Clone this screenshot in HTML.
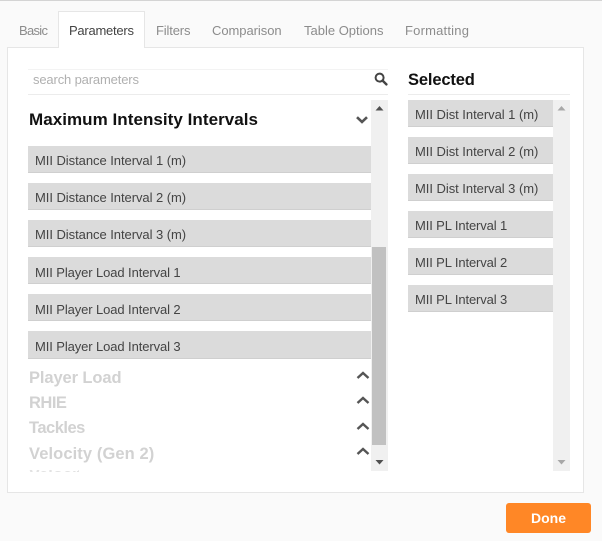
<!DOCTYPE html>
<html>
<head>
<meta charset="utf-8">
<style>
html,body{margin:0;padding:0}
body{width:602px;height:541px;background:#fafafa;position:relative;overflow:hidden;font-family:"Liberation Sans",sans-serif;color:#333}
.a{position:absolute;white-space:nowrap}
#top{left:0;top:0;width:602px;height:1px;background:#d4d4d4}
#panel{left:7px;top:47px;width:575px;height:444px;background:#fff;border:1px solid #e6e6e6;box-sizing:content-box}
#tabact{left:58px;top:11px;width:87px;height:37px;background:#fff;border:1px solid #e6e6e6;border-bottom:none;box-sizing:border-box;z-index:2}
.tab{top:22px;font-size:13px;line-height:17px;color:#8c8c8c;z-index:3}
.item{left:28px;width:343px;height:27px;background:#dbdbdb;border-bottom:1px solid #cfcfcf;box-sizing:border-box;font-size:13px;line-height:29px;padding-left:7px;color:#444;letter-spacing:-.05px}
.pl{letter-spacing:-.1px;line-height:31px}
.sel{left:408px;width:145px;height:27px;background:#dbdbdb;border-bottom:1px solid #cfcfcf;box-sizing:border-box;font-size:13px;line-height:29px;padding-left:7px;color:#444;letter-spacing:-.04px}
.sp{letter-spacing:-.12px}
.grp{left:29px;font-size:16.5px;font-weight:bold;color:#d2d2d2;line-height:22px}
svg{position:absolute;overflow:visible}
</style>
</head>
<body>
<div class="a" id="top"></div>
<div class="a" id="panel"></div>
<div class="a" id="tabact"></div>
<div class="a tab" style="left:19px;letter-spacing:-.7px">Basic</div>
<div class="a tab" style="left:69px;color:#444;letter-spacing:-.25px">Parameters</div>
<div class="a tab" style="left:156px;letter-spacing:-.15px">Filters</div>
<div class="a tab" style="left:212px;letter-spacing:-.05px">Comparison</div>
<div class="a tab" style="left:304px;letter-spacing:0">Table Options</div>
<div class="a tab" style="left:405px;letter-spacing:.2px">Formatting</div>

<!-- search -->
<div class="a" style="left:28px;top:69px;width:360px;height:26px;border-top:1px solid #f3f3f3;border-bottom:1px solid #ececec;box-sizing:border-box"></div>
<div class="a" style="left:33px;top:71px;font-size:13px;line-height:17px;color:#b0b0b0;letter-spacing:-.15px">search parameters</div>
<svg style="left:374px;top:72px" width="14" height="14" viewBox="0 0 14 14"><circle cx="5.6" cy="5.6" r="4" fill="none" stroke="#444" stroke-width="2"/><path d="M8.6 8.6L12.4 12.4" stroke="#444" stroke-width="2.4" stroke-linecap="round"/></svg>

<div class="a" style="left:29px;top:108px;font-size:17px;line-height:23px;font-weight:bold;color:#111;letter-spacing:.05px">Maximum Intensity Intervals</div>
<svg style="left:355px;top:115px" width="14" height="10" viewBox="0 0 14 10"><path d="M2 2.2L7 7L12 2.2" fill="none" stroke="#555" stroke-width="2.6"/></svg>

<div class="a item" style="top:146px">MII Distance Interval 1 (m)</div>
<div class="a item" style="top:183px">MII Distance Interval 2 (m)</div>
<div class="a item" style="top:220px">MII Distance Interval 3 (m)</div>
<div class="a item pl" style="top:257px">MII Player Load Interval 1</div>
<div class="a item pl" style="top:294px">MII Player Load Interval 2</div>
<div class="a item pl" style="top:331px;height:28px">MII Player Load Interval 3</div>

<div class="a grp" style="top:367px;letter-spacing:-.1px">Player Load</div>
<div class="a grp" style="top:392px;letter-spacing:-.5px">RHIE</div>
<div class="a grp" style="top:417px;letter-spacing:-.5px">Tackles</div>
<div class="a grp" style="top:443px;letter-spacing:.1px">Velocity (Gen 2)</div>
<div class="a" style="left:29px;top:470px;width:50px;height:2px;overflow:hidden"><div style="font-size:16.5px;font-weight:bold;color:#e2e2e2;line-height:22px;margin-top:-6px">Velocity</div></div>

<svg style="left:356px;top:371px" width="14" height="9" viewBox="0 0 14 9"><path d="M1.5 7L7 2L12.5 7" fill="none" stroke="#555" stroke-width="2.4"/></svg>
<svg style="left:356px;top:396px" width="14" height="9" viewBox="0 0 14 9"><path d="M1.5 7L7 2L12.5 7" fill="none" stroke="#555" stroke-width="2.4"/></svg>
<svg style="left:356px;top:422px" width="14" height="9" viewBox="0 0 14 9"><path d="M1.5 7L7 2L12.5 7" fill="none" stroke="#555" stroke-width="2.4"/></svg>
<svg style="left:356px;top:447px" width="14" height="9" viewBox="0 0 14 9"><path d="M1.5 7L7 2L12.5 7" fill="none" stroke="#555" stroke-width="2.4"/></svg>

<!-- left scrollbar -->
<div class="a" style="left:371px;top:100px;width:17px;height:371px;background:#f0f0f0"></div>
<div class="a" style="left:372px;top:247px;width:14px;height:198px;background:#c1c1c1"></div>
<svg style="left:375px;top:106px" width="9" height="5"><path d="M4.5 0L8.5 4.5H0.5Z" fill="#505050"/></svg>
<svg style="left:375px;top:460px" width="9" height="5"><path d="M0.5 0H8.5L4.5 4.5Z" fill="#505050"/></svg>

<!-- selected -->
<div class="a" style="left:408px;top:69px;font-size:16.5px;line-height:22px;font-weight:bold;color:#111;letter-spacing:-.15px">Selected</div>
<div class="a" style="left:408px;top:94px;width:162px;height:1px;background:#ececec"></div>
<div class="a sel" style="top:100px">MII Dist Interval 1 (m)</div>
<div class="a sel" style="top:137px">MII Dist Interval 2 (m)</div>
<div class="a sel" style="top:174px">MII Dist Interval 3 (m)</div>
<div class="a sel sp" style="top:211px">MII PL Interval 1</div>
<div class="a sel sp" style="top:248px">MII PL Interval 2</div>
<div class="a sel sp" style="top:285px">MII PL Interval 3</div>

<div class="a" style="left:553px;top:100px;width:17px;height:371px;background:#f0f0f0"></div>
<svg style="left:557px;top:106px" width="9" height="5"><path d="M4.5 0L8.5 4.5H0.5Z" fill="#a8a8a8"/></svg>
<svg style="left:557px;top:460px" width="9" height="5"><path d="M0.5 0H8.5L4.5 4.5Z" fill="#a8a8a8"/></svg>

<!-- done -->
<div class="a" style="left:506px;top:503px;width:85px;height:30px;background:#ff8726;border-radius:3px;color:#fff;font-size:14px;font-weight:bold;line-height:31px;text-align:center">Done</div>
</body>
</html>
